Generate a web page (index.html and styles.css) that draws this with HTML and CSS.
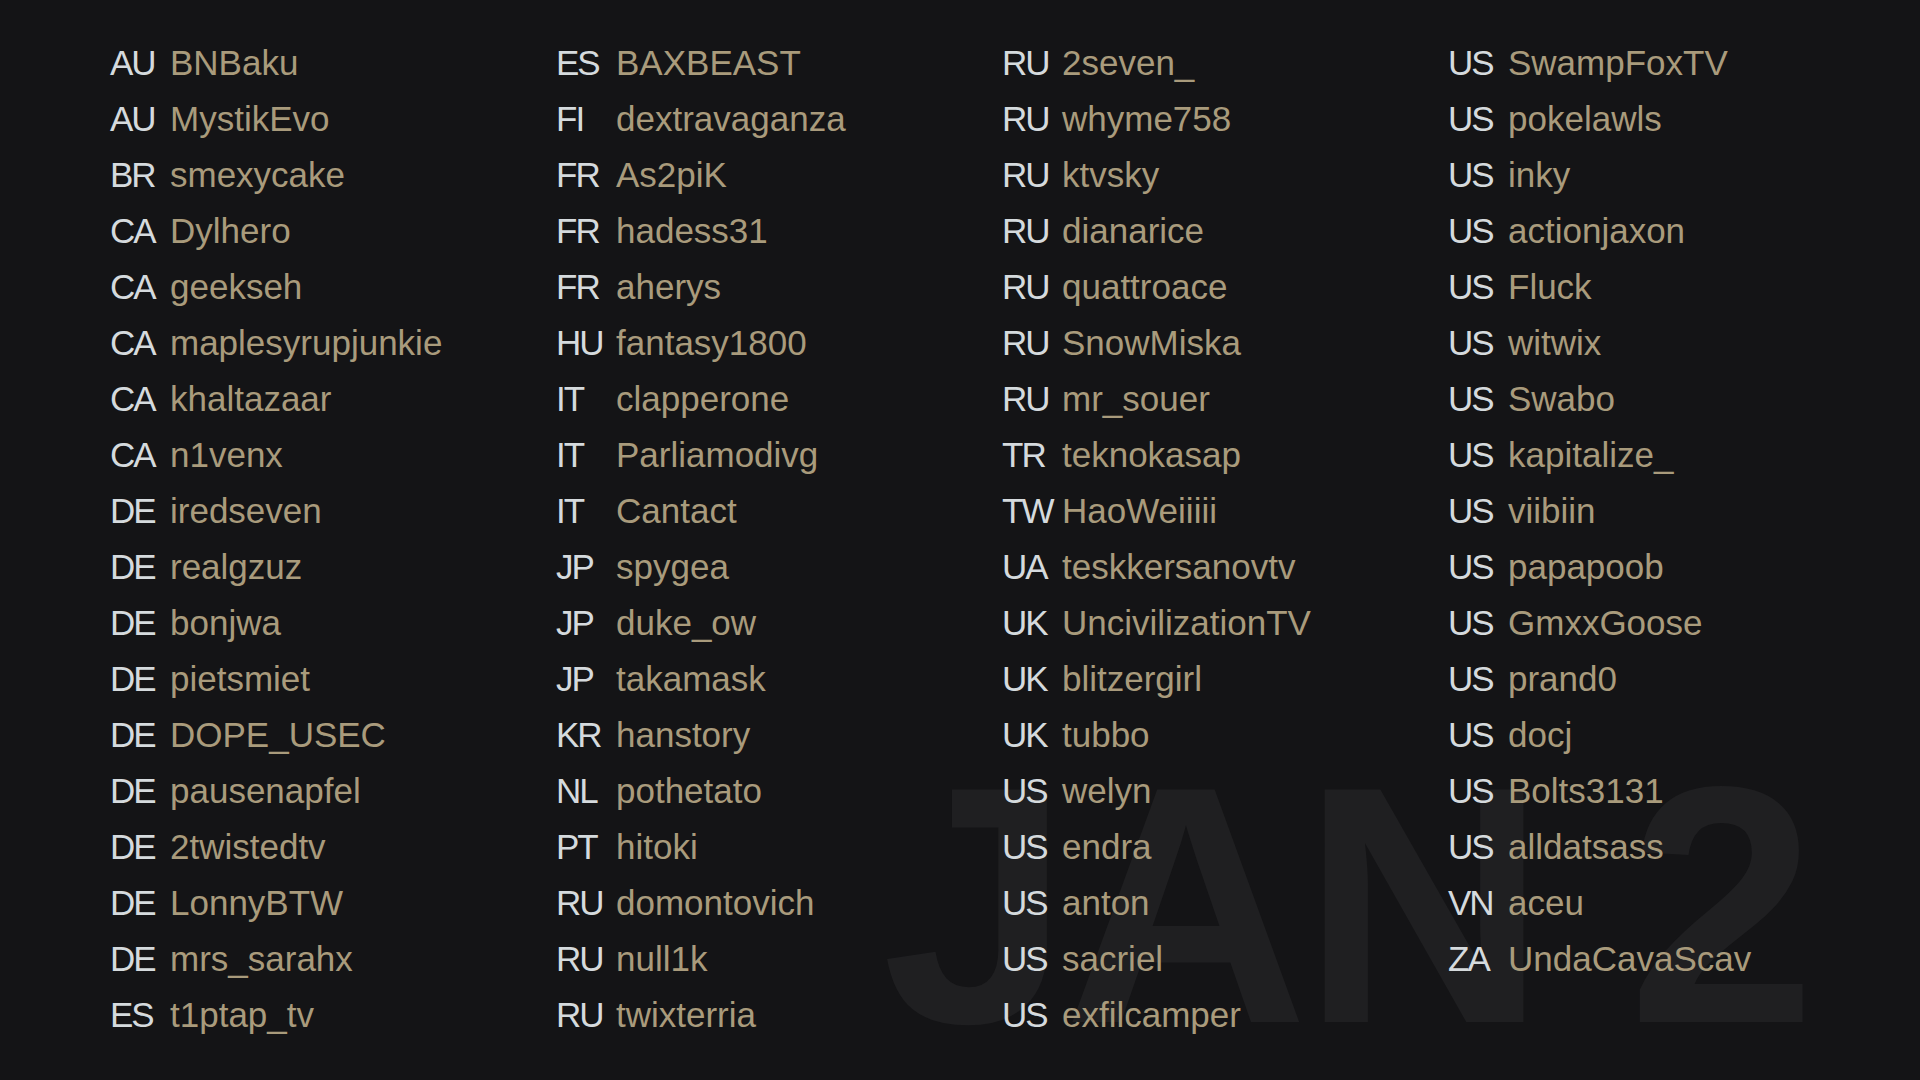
FILE: index.html
```html
<!DOCTYPE html>
<html lang="en">
<head>
<meta charset="utf-8">
<title>Streamers</title>
<link rel="stylesheet" href="styles.css">
</head>
<body>
<div class="page">
  <div class="watermark" aria-hidden="true">JAN 2</div>
  <div class="grid">
    <div class="entry"><span class="cc">AU</span><span class="nm">BNBaku</span></div>
    <div class="entry"><span class="cc">AU</span><span class="nm">MystikEvo</span></div>
    <div class="entry"><span class="cc">BR</span><span class="nm">smexycake</span></div>
    <div class="entry"><span class="cc">CA</span><span class="nm">Dylhero</span></div>
    <div class="entry"><span class="cc">CA</span><span class="nm">geekseh</span></div>
    <div class="entry"><span class="cc">CA</span><span class="nm">maplesyrupjunkie</span></div>
    <div class="entry"><span class="cc">CA</span><span class="nm">khaltazaar</span></div>
    <div class="entry"><span class="cc">CA</span><span class="nm">n1venx</span></div>
    <div class="entry"><span class="cc">DE</span><span class="nm">iredseven</span></div>
    <div class="entry"><span class="cc">DE</span><span class="nm">realgzuz</span></div>
    <div class="entry"><span class="cc">DE</span><span class="nm">bonjwa</span></div>
    <div class="entry"><span class="cc">DE</span><span class="nm">pietsmiet</span></div>
    <div class="entry"><span class="cc">DE</span><span class="nm">DOPE_USEC</span></div>
    <div class="entry"><span class="cc">DE</span><span class="nm">pausenapfel</span></div>
    <div class="entry"><span class="cc">DE</span><span class="nm">2twistedtv</span></div>
    <div class="entry"><span class="cc">DE</span><span class="nm">LonnyBTW</span></div>
    <div class="entry"><span class="cc">DE</span><span class="nm">mrs_sarahx</span></div>
    <div class="entry"><span class="cc">ES</span><span class="nm">t1ptap_tv</span></div>

    <div class="entry"><span class="cc">ES</span><span class="nm">BAXBEAST</span></div>
    <div class="entry"><span class="cc">FI</span><span class="nm">dextravaganza</span></div>
    <div class="entry"><span class="cc">FR</span><span class="nm">As2piK</span></div>
    <div class="entry"><span class="cc">FR</span><span class="nm">hadess31</span></div>
    <div class="entry"><span class="cc">FR</span><span class="nm">aherys</span></div>
    <div class="entry"><span class="cc">HU</span><span class="nm">fantasy1800</span></div>
    <div class="entry"><span class="cc">IT</span><span class="nm">clapperone</span></div>
    <div class="entry"><span class="cc">IT</span><span class="nm">Parliamodivg</span></div>
    <div class="entry"><span class="cc">IT</span><span class="nm">Cantact</span></div>
    <div class="entry"><span class="cc">JP</span><span class="nm">spygea</span></div>
    <div class="entry"><span class="cc">JP</span><span class="nm">duke_ow</span></div>
    <div class="entry"><span class="cc">JP</span><span class="nm">takamask</span></div>
    <div class="entry"><span class="cc">KR</span><span class="nm">hanstory</span></div>
    <div class="entry"><span class="cc">NL</span><span class="nm">pothetato</span></div>
    <div class="entry"><span class="cc">PT</span><span class="nm">hitoki</span></div>
    <div class="entry"><span class="cc">RU</span><span class="nm">domontovich</span></div>
    <div class="entry"><span class="cc">RU</span><span class="nm">null1k</span></div>
    <div class="entry"><span class="cc">RU</span><span class="nm">twixterria</span></div>

    <div class="entry"><span class="cc">RU</span><span class="nm">2seven_</span></div>
    <div class="entry"><span class="cc">RU</span><span class="nm">whyme758</span></div>
    <div class="entry"><span class="cc">RU</span><span class="nm">ktvsky</span></div>
    <div class="entry"><span class="cc">RU</span><span class="nm">dianarice</span></div>
    <div class="entry"><span class="cc">RU</span><span class="nm">quattroace</span></div>
    <div class="entry"><span class="cc">RU</span><span class="nm">SnowMiska</span></div>
    <div class="entry"><span class="cc">RU</span><span class="nm">mr_souer</span></div>
    <div class="entry"><span class="cc">TR</span><span class="nm">teknokasap</span></div>
    <div class="entry"><span class="cc">TW</span><span class="nm">HaoWeiiiii</span></div>
    <div class="entry"><span class="cc">UA</span><span class="nm">teskkersanovtv</span></div>
    <div class="entry"><span class="cc">UK</span><span class="nm">UncivilizationTV</span></div>
    <div class="entry"><span class="cc">UK</span><span class="nm">blitzergirl</span></div>
    <div class="entry"><span class="cc">UK</span><span class="nm">tubbo</span></div>
    <div class="entry"><span class="cc">US</span><span class="nm">welyn</span></div>
    <div class="entry"><span class="cc">US</span><span class="nm">endra</span></div>
    <div class="entry"><span class="cc">US</span><span class="nm">anton</span></div>
    <div class="entry"><span class="cc">US</span><span class="nm">sacriel</span></div>
    <div class="entry"><span class="cc">US</span><span class="nm">exfilcamper</span></div>

    <div class="entry"><span class="cc">US</span><span class="nm">SwampFoxTV</span></div>
    <div class="entry"><span class="cc">US</span><span class="nm">pokelawls</span></div>
    <div class="entry"><span class="cc">US</span><span class="nm">inky</span></div>
    <div class="entry"><span class="cc">US</span><span class="nm">actionjaxon</span></div>
    <div class="entry"><span class="cc">US</span><span class="nm">Fluck</span></div>
    <div class="entry"><span class="cc">US</span><span class="nm">witwix</span></div>
    <div class="entry"><span class="cc">US</span><span class="nm">Swabo</span></div>
    <div class="entry"><span class="cc">US</span><span class="nm">kapitalize_</span></div>
    <div class="entry"><span class="cc">US</span><span class="nm">viibiin</span></div>
    <div class="entry"><span class="cc">US</span><span class="nm">papapoob</span></div>
    <div class="entry"><span class="cc">US</span><span class="nm">GmxxGoose</span></div>
    <div class="entry"><span class="cc">US</span><span class="nm">prand0</span></div>
    <div class="entry"><span class="cc">US</span><span class="nm">docj</span></div>
    <div class="entry"><span class="cc">US</span><span class="nm">Bolts3131</span></div>
    <div class="entry"><span class="cc">US</span><span class="nm">alldatsass</span></div>
    <div class="entry"><span class="cc">VN</span><span class="nm">aceu</span></div>
    <div class="entry"><span class="cc">ZA</span><span class="nm">UndaCavaScav</span></div>
  </div>
</div>
</body>
</html>
```

FILE: styles.css
```css
html, body {
  margin: 0;
  padding: 0;
  background: #141416;
  overflow: hidden;
}

.page {
  position: relative;
  width: 1920px;
  height: 1080px;
  box-sizing: border-box;
  padding: 35px 0 0 110px;
  font-family: "Liberation Sans", Arial, sans-serif;
}

.watermark {
  position: absolute;
  left: 882px;
  top: 736px;
  font-family: "Liberation Sans", Arial, sans-serif;
  font-weight: 700;
  font-size: 338px;
  line-height: 338px;
  letter-spacing: -6px;
  color: #1f1f21;
  white-space: nowrap;
  z-index: 0;
}

.grid {
  position: relative;
  z-index: 1;
  display: grid;
  grid-template-columns: repeat(4, 446px);
  grid-template-rows: repeat(18, 56px);
  grid-auto-flow: column;
}

.entry {
  display: flex;
  align-items: center;
  font-size: 35px;
  line-height: 56px;
  white-space: nowrap;
}

.cc {
  width: 60px;
  flex: none;
  letter-spacing: -2px;
  color: #d5dadd;
}

.nm {
  color: #a99b7c;
}
```
